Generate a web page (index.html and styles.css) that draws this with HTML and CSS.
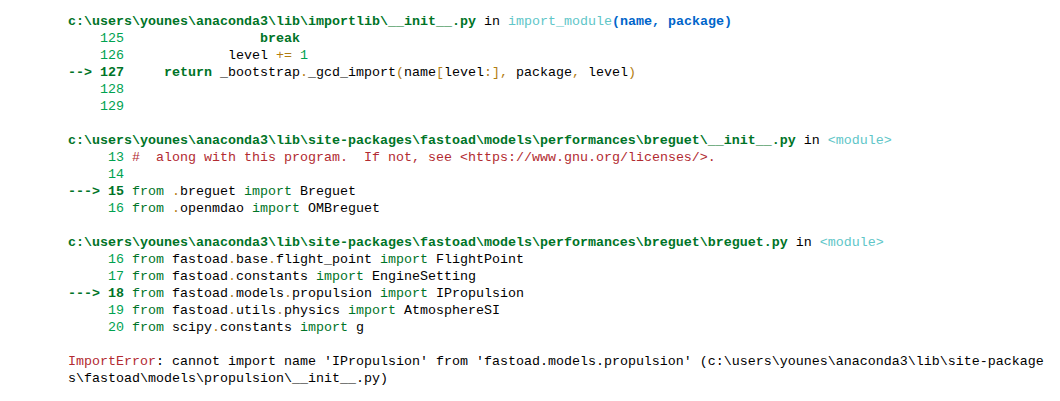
FILE: index.html
```html
<!DOCTYPE html>
<html>
<head>
    <meta charset="UTF-8">
    <title>Traceback</title>
    <link rel="stylesheet" href="styles.css">
</head>
<body>
<div class="output">
<pre class="trace"><span class="path">c:\users\younes\anaconda3\lib\importlib\__init__.py</span> in <span class="fn">import_module</span><span class="args">(name, package)</span>
<span class="ln">    125</span>                 <span class="kw">break</span>
<span class="ln">    126</span>             level <span class="op">+=</span> <span class="num">1</span>
<span class="cur">--&gt; 127</span>     <span class="kw">return</span> _bootstrap<span class="op">.</span>_gcd_import<span class="op">(</span>name<span class="op">[</span>level<span class="op">:</span><span class="op">]</span><span class="op">,</span> package<span class="op">,</span> level<span class="op">)</span>
<span class="ln">    128</span>
<span class="ln">    129</span>

<span class="path">c:\users\younes\anaconda3\lib\site-packages\fastoad\models\performances\breguet\__init__.py</span> in <span class="fn">&lt;module&gt;</span>
<span class="ln">     13</span> <span class="cm">#  along with this program.  If not, see &lt;https://www.gnu.org/licenses/&gt;.</span>
<span class="ln">     14</span>
<span class="cur">---&gt; 15</span> <span class="kwn">from</span> <span class="op">.</span>breguet <span class="kwn">import</span> Breguet
<span class="ln">     16</span> <span class="kwn">from</span> <span class="op">.</span>openmdao <span class="kwn">import</span> OMBreguet

<span class="path">c:\users\younes\anaconda3\lib\site-packages\fastoad\models\performances\breguet\breguet.py</span> in <span class="fn">&lt;module&gt;</span>
<span class="ln">     16</span> <span class="kwn">from</span> fastoad<span class="op">.</span>base<span class="op">.</span>flight_point <span class="kwn">import</span> FlightPoint
<span class="ln">     17</span> <span class="kwn">from</span> fastoad<span class="op">.</span>constants <span class="kwn">import</span> EngineSetting
<span class="cur">---&gt; 18</span> <span class="kwn">from</span> fastoad<span class="op">.</span>models<span class="op">.</span>propulsion <span class="kwn">import</span> IPropulsion
<span class="ln">     19</span> <span class="kwn">from</span> fastoad<span class="op">.</span>utils<span class="op">.</span>physics <span class="kwn">import</span> AtmosphereSI
<span class="ln">     20</span> <span class="kwn">from</span> scipy<span class="op">.</span>constants <span class="kwn">import</span> g

<span class="err">ImportError</span>: cannot import name 'IPropulsion' from 'fastoad.models.propulsion' (c:\users\younes\anaconda3\lib\site-packages\fastoad\models\propulsion\__init__.py)</pre>
</div>
</body>
</html>
```

FILE: styles.css
```css
* { margin: 0; padding: 0; }
body {
    background: #fff;
    color: #000;
    font-family: "Liberation Mono", "Courier New", monospace;
}
.output {
    padding: 13px 0 0 68px;
}
.trace {
    width: 976px;
    font-family: "Liberation Mono", "Courier New", monospace;
    font-size: 13.33px;
    line-height: 17px;
    white-space: pre-wrap;
    word-break: break-all;
}
.path { color: #007427; font-weight: bold; }
.fn { color: #60C6C8; }
.args { color: #0065CA; font-weight: bold; }
.ln { color: #00A250; }
.cur { color: #007427; font-weight: bold; }
.kw { color: #007427; font-weight: bold; }
.kwn { color: #007427; }
.op { color: #B27D12; }
.num { color: #00A250; }
.cm { color: #B22B31; }
.err { color: #B22B31; }
```
